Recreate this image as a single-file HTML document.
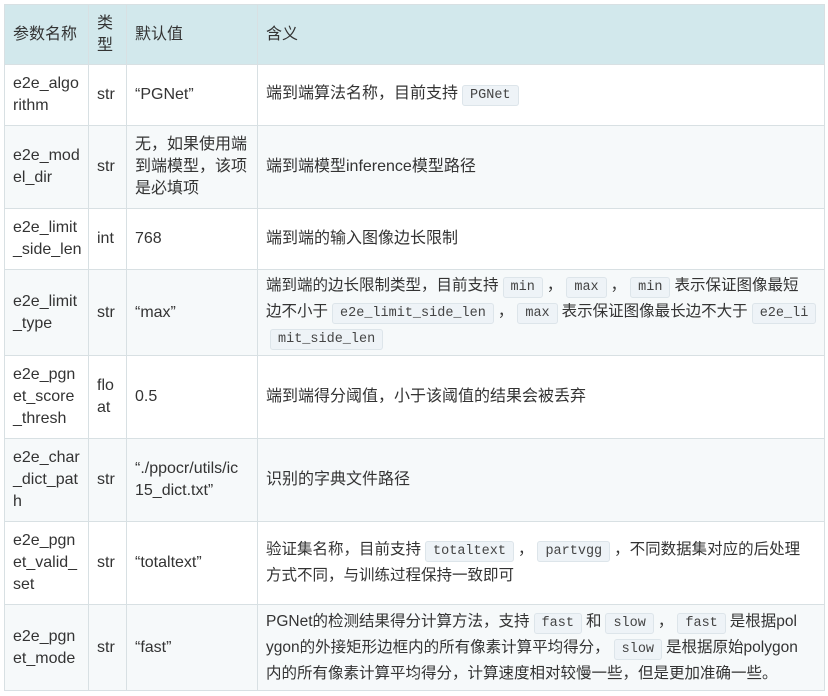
<!DOCTYPE html>
<html><head><meta charset="utf-8"><style>
body{margin:0;background:#fff;width:828px;height:696px;overflow:hidden;font-family:"Liberation Sans","Noto Sans CJK SC",sans-serif;color:#333;font-size:16px}
table{position:absolute;left:4px;top:4px;border-collapse:collapse;table-layout:fixed;width:821px}
td{border:1px solid #d8e0e3;padding:0 8px;line-height:22px;vertical-align:middle;white-space:nowrap;overflow:hidden}
tr.h td{background:#d2e8ec}
tr.g td{background:#f6f9fa}
code{font-family:"Liberation Mono",monospace;font-size:13.5px;background:#eef3f7;border:1px solid #dde5ea;border-radius:3px;padding:2px 7px;margin:0 4px;color:#444}
.t{line-height:24px;font-size:15.5px}
</style></head><body>
<table>
<colgroup><col style="width:84px"><col style="width:38px"><col style="width:131px"><col></colgroup>
<tr class="h" style="height:60px"><td>参数名称</td><td>类<br>型</td><td>默认值</td><td>含义</td></tr>
<tr style="height:61px"><td>e2e_algo<br>rithm</td><td>str</td><td>“PGNet”</td><td>端到端算法名称，目前支持<code>PGNet</code></td></tr>
<tr class="g" style="height:83px"><td>e2e_mod<br>el_dir</td><td>str</td><td>无，如果使用端<br>到端模型，该项<br>是必填项</td><td>端到端模型inference模型路径</td></tr>
<tr style="height:61px"><td>e2e_limit<br>_side_len</td><td>int</td><td>768</td><td>端到端的输入图像边长限制</td></tr>
<tr class="g" style="height:86px"><td>e2e_limit<br>_type</td><td>str</td><td>“max”</td><td class="t">端到端的边长限制类型，目前支持<code>min</code>，<code>max</code>，<code>min</code>表示保证图像最短<br>边不小于<code>e2e_limit_side_len</code>，<code>max</code>表示保证图像最长边不大于<code>e2e_li</code><br><code>mit_side_len</code></td></tr>
<tr style="height:83px"><td>e2e_pgn<br>et_score<br>_thresh</td><td>flo<br>at</td><td>0.5</td><td>端到端得分阈值，小于该阈值的结果会被丢弃</td></tr>
<tr class="g" style="height:83px"><td>e2e_char<br>_dict_pat<br>h</td><td>str</td><td>“./ppocr/utils/ic<br>15_dict.txt”</td><td>识别的字典文件路径</td></tr>
<tr style="height:83px"><td>e2e_pgn<br>et_valid_<br>set</td><td>str</td><td>“totaltext”</td><td class="t">验证集名称，目前支持<code>totaltext</code>，<code>partvgg</code>，不同数据集对应的后处理<br>方式不同，与训练过程保持一致即可</td></tr>
<tr class="g" style="height:86px"><td>e2e_pgn<br>et_mode</td><td>str</td><td>“fast”</td><td class="t">PGNet的检测结果得分计算方法，支持<code>fast</code>和<code>slow</code>，<code>fast</code>是根据pol<br>ygon的外接矩形边框内的所有像素计算平均得分，<code>slow</code>是根据原始polygon<br>内的所有像素计算平均得分，计算速度相对较慢一些，但是更加准确一些。</td></tr>
</table>
</body></html>
